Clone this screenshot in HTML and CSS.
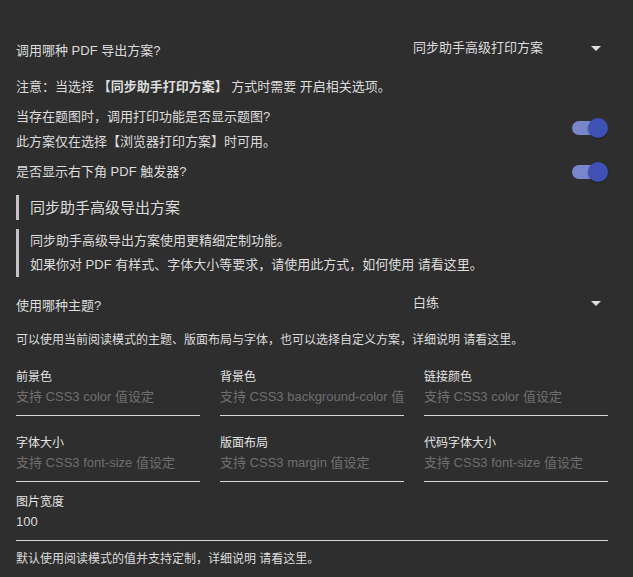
FILE: index.html
```html
<!DOCTYPE html>
<html lang="zh-CN">
<head>
<meta charset="utf-8">
<title>设置</title>
<link rel="stylesheet" href="styles.css">
</head>
<body>
<div class="page">
  <div class="row row-select first">
    <div class="label">调用哪种 PDF 导出方案?</div>
    <div class="select">
      <span class="select-text">同步助手高级打印方案</span>
      <span class="arrow"></span>
    </div>
  </div>

  <div class="note">注意：当选择 <b>【同步助手打印方案】</b> 方式时需要 开启相关选项。</div>

  <div class="row row-toggle two">
    <div class="label">
      <div>当存在题图时，调用打印功能是否显示题图?</div>
      <div>此方案仅在选择【浏览器打印方案】时可用。</div>
    </div>
    <div class="switch"><span class="track"></span><span class="knob"></span></div>
  </div>

  <div class="row row-toggle single">
    <div class="label">是否显示右下角 PDF 触发器?</div>
    <div class="switch"><span class="track"></span><span class="knob"></span></div>
  </div>

  <div class="quote quote-title">同步助手高级导出方案</div>
  <div class="quote quote-body">
    <div>同步助手高级导出方案使用更精细定制功能。</div>
    <div>如果你对 PDF 有样式、字体大小等要求，请使用此方式，如何使用 请看这里。</div>
  </div>

  <div class="row row-select theme">
    <div class="label">使用哪种主题?</div>
    <div class="select">
      <span class="select-text">白练</span>
      <span class="arrow"></span>
    </div>
  </div>

  <div class="desc">可以使用当前阅读模式的主题、版面布局与字体，也可以选择自定义方案，详细说明 请看这里。</div>

  <div class="fields">
    <div class="field">
      <div class="field-label">前景色</div>
      <div class="field-input placeholder">支持 CSS3 color 值设定</div>
    </div>
    <div class="field">
      <div class="field-label">背景色</div>
      <div class="field-input placeholder">支持 CSS3 background-color 值设定</div>
    </div>
    <div class="field">
      <div class="field-label">链接颜色</div>
      <div class="field-input placeholder">支持 CSS3 color 值设定</div>
    </div>
    <div class="field">
      <div class="field-label">字体大小</div>
      <div class="field-input placeholder">支持 CSS3 font-size 值设定</div>
    </div>
    <div class="field">
      <div class="field-label">版面布局</div>
      <div class="field-input placeholder">支持 CSS3 margin 值设定</div>
    </div>
    <div class="field">
      <div class="field-label">代码字体大小</div>
      <div class="field-input placeholder">支持 CSS3 font-size 值设定</div>
    </div>
  </div>

  <div class="field wide">
    <div class="field-label">图片宽度</div>
    <div class="field-input">100</div>
  </div>

  <div class="foot">默认使用阅读模式的值并支持定制，详细说明 请看这里。</div>
</div>
</body>
</html>
```

FILE: styles.css
```css
html, body {
  margin: 0;
  padding: 0;
  background: #2e2e2e;
}
body {
  font-family: "Liberation Sans", "Noto Sans CJK SC", sans-serif;
  color: #dcdcdc;
  font-size: 13px;
}
.page {
  padding: 39px 25px 0 16px;
}
.row {
  display: flex;
  justify-content: space-between;
  align-items: center;
}
.label {
  line-height: 24px;
}
.row-select {
  align-items: flex-start;
}
.select {
  width: 195px;
  display: flex;
  justify-content: space-between;
  align-items: center;
  margin-top: -3px;
  height: 24px;
}
.select-text {
  line-height: 24px;
}
.arrow {
  width: 0;
  height: 0;
  border-left: 5px solid transparent;
  border-right: 5px solid transparent;
  border-top: 5px solid #e0e0e0;
  margin-right: 7px;
}
.note {
  margin-top: 12px;
  line-height: 24px;
}
.note b {
  font-weight: bold;
}
.two {
  margin-top: 5px;
}
.two .label {
  line-height: 25px;
}
.two .switch {
  margin-top: -2px;
}
.single {
  margin-top: 6px;
}
.switch {
  position: relative;
  width: 36px;
  height: 20px;
  flex: none;
}
.track {
  position: absolute;
  left: 0;
  top: 3px;
  width: 34px;
  height: 14px;
  border-radius: 7px;
  background: #7986cb;
}
.knob {
  position: absolute;
  right: 0;
  top: 0;
  width: 20px;
  height: 20px;
  border-radius: 50%;
  background: #3f51b5;
  box-shadow: 0 1px 2px rgba(0,0,0,0.35);
}
.quote {
  border-left: 3px solid #c4c4c4;
  padding-left: 11px;
}
.quote-title {
  margin-top: 11px;
  font-size: 15px;
  line-height: 25px;
}
.quote-body {
  margin-top: 9px;
  line-height: 24px;
}
.theme {
  margin-top: 17px;
}
.desc {
  margin-top: 10px;
  line-height: 24px;
  font-size: 12px;
}
.fields {
  margin-top: 15px;
  display: grid;
  grid-template-columns: repeat(3, 1fr);
  column-gap: 20px;
  row-gap: 17px;
}
.field {
  border-bottom: 1px solid #d8d8d8;
  padding-bottom: 8px;
  min-width: 0;
}
.field-label {
  font-size: 12px;
  line-height: 20px;
  color: #e4e4e4;
}
.field-input {
  line-height: 20px;
  white-space: nowrap;
  overflow: hidden;
}
.placeholder {
  color: #6e6e6e;
}
.wide {
  margin-top: 10px;
}
.foot {
  margin-top: 6px;
  line-height: 24px;
  font-size: 12px;
}
```
